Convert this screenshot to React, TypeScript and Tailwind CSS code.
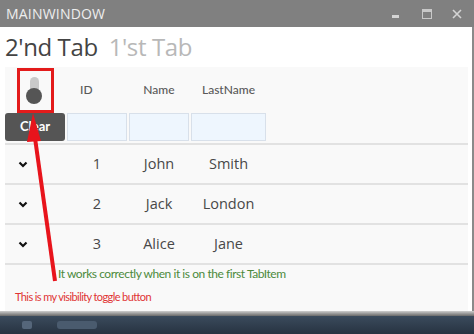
import React from "react"

const rows = [
  { id: 1, name: "John", last: "Smith" },
  { id: 2, name: "Jack", last: "London" },
  { id: 3, name: "Alice", last: "Jane" },
]

function Chevron() {
  return (
    <svg width="10" height="7" viewBox="0 0 10 7">
      <polyline points="1.5,1.5 5,5 8.5,1.5" fill="none" stroke="#111" strokeWidth="2.2" />
    </svg>
  )
}

export default function App() {
  return (
    <div className="relative w-[474px] h-[334px] overflow-hidden bg-[#2a3645] font-['Open_Sans',sans-serif]">
      <div className="flex flex-col h-[316px]">
        {/* title bar */}
        <div className="h-[27px] bg-[#808080] flex items-center pl-[6px] pr-[12px] shrink-0">
          <span className="text-[14px] text-[#eeeeee] tracking-[0.2px]">MAINWINDOW</span>
          <div className="ml-auto flex items-center">
            <div className="w-[7px] h-[3px] bg-[#d4d4d4] mt-[5px]" />
            <div className="ml-[23px] w-[10px] h-[10px] border border-[#c8c8c8] border-t-[3px]" />
            <svg className="ml-[20px]" width="10" height="10" viewBox="0 0 10 10">
              <path d="M1 1 L9 9 M9 1 L1 9" stroke="#d4d4d4" strokeWidth="1.6" />
            </svg>
          </div>
        </div>

        {/* window body */}
        <div className="flex-1 flex flex-col bg-white border-r-2 border-[#8a8a8a] pr-[4px]">
          <div className="h-[40px] flex items-center pl-[5px] gap-[11px] shrink-0">
            <span className="text-[24px] text-[#444444] tracking-[-0.4px]">2'nd Tab</span>
            <span className="text-[24px] text-[#b8b8b8] tracking-[-0.4px]">1'st Tab</span>
          </div>

          <div className="ml-[5px] flex-1 bg-[#f9f9f9] flex flex-col font-['Lato',sans-serif]">
            {/* header */}
            <div className="flex gap-[2px] h-[46px] items-center">
              <div className="w-[60px] h-full flex justify-center items-start pt-[1px]">
                <div className="w-[37px] h-[45px] border-[3px] border-[#e31b1b] relative">
                  <div className="absolute left-[10px] top-[6px] w-[9px] h-[18px] rounded-full bg-[#c9c9c9]" />
                  <div className="absolute left-[6px] top-[17px] w-[16px] h-[16px] rounded-full bg-[#555555]" />
                </div>
              </div>
              <div className="w-[60px] pl-[13px] text-[12px] text-[#5a5a5a] font-medium">ID</div>
              <div className="w-[60px] text-center text-[12px] text-[#5a5a5a] font-medium">Name</div>
              <div className="w-[75px] text-center text-[12px] text-[#5a5a5a] font-medium">LastName</div>
            </div>

            {/* filter row */}
            <div className="flex gap-[2px] h-[28px]">
              <div className="w-[60px] h-full bg-[#555555] rounded-[3px] flex items-center justify-center text-white font-bold text-[13px]">
                Clear
              </div>
              <div className="w-[60px] h-full bg-[#eef6fe] border border-[#d8e0ea]" />
              <div className="w-[60px] h-full bg-[#eef6fe] border border-[#d8e0ea]" />
              <div className="w-[75px] h-full bg-[#eef6fe] border border-[#d8e0ea]" />
            </div>

            <div className="h-[2px] mt-[2px] bg-[#e2e2e2]" />
            {rows.map((r) => (
              <div key={r.id} className="flex flex-col">
                <div className="flex gap-[2px] h-[38px] items-center text-[14.5px] text-[#484848] font-['Open_Sans',sans-serif]">
                  <div className="w-[60px] pl-[13px] flex items-center">
                    <Chevron />
                  </div>
                  <div className="w-[60px] text-center">{r.id}</div>
                  <div className="w-[60px] text-center">{r.name}</div>
                  <div className="w-[75px] text-center">{r.last}</div>
                </div>
                <div className="h-[2px] bg-[#e2e2e2]" />
              </div>
            ))}

            <div className="pl-[53px] pt-[1px] text-[12px] text-[#4c8a3c] tracking-[-0.45px] leading-[16px]">
              It works correctly when it is on the first TabItem
            </div>
            <div className="pl-[10px] pt-[7px] text-[11px] text-[#e03434] tracking-[-0.6px] leading-[16px]">
              This is my visibility toggle button
            </div>
          </div>
        </div>
        <div className="h-[5px] bg-gradient-to-b from-[#cfcfcf] to-[#6a6a6a] shrink-0" />
      </div>

      {/* taskbar */}
      <div className="h-[18px] bg-gradient-to-b from-[#3b4b5d] to-[#273341] flex items-center pl-[22px] gap-[25px]">
        <div className="w-[10px] h-[8px] rounded-[2px] bg-[#55667a]" />
        <div className="w-[40px] h-[8px] rounded-[3px] bg-[#4a5b6e]" />
      </div>

      {/* red annotation arrow */}
      <svg className="absolute left-0 top-0 pointer-events-none" width="474" height="334">
        <line x1="55" y1="281" x2="35" y2="138" stroke="#e8141c" strokeWidth="4" />
        <polygon points="33,113 27,142 41,141" fill="#e8141c" />
      </svg>
    </div>
  )
}
